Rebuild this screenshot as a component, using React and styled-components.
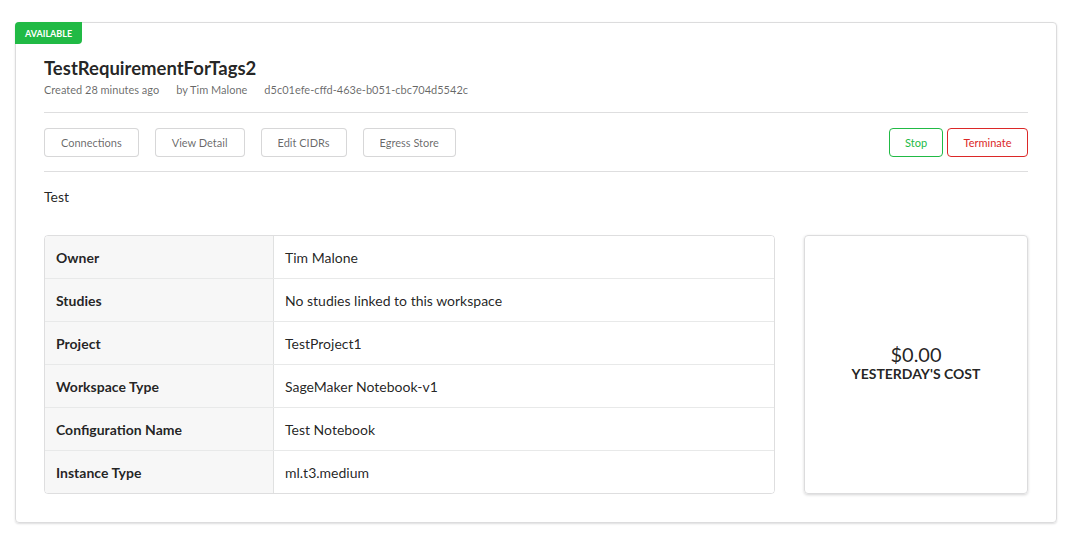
import React from 'react';
import styled, { createGlobalStyle } from 'styled-components';

const GlobalStyle = createGlobalStyle`
  * { box-sizing: border-box; }
  body {
    margin: 0;
    background: #ffffff;
    font-family: Lato, "Helvetica Neue", Arial, sans-serif;
    color: rgba(0, 0, 0, 0.87);
  }
`;

const Page = styled.div`
  padding: 22px 27px 22px 15px;
`;

const Card = styled.div`
  position: relative;
  border: 1px solid #dcdcdd;
  border-radius: 4px;
  box-shadow: 0 1px 2px 0 rgba(34, 36, 38, 0.15);
  padding: 34px 28px 28px 28px;
`;

const StatusLabel = styled.div`
  position: absolute;
  top: -1px;
  left: -1px;
  height: 22px;
  padding: 0 10px;
  display: flex;
  align-items: center;
  background: #21ba45;
  color: #fff;
  font-size: 9px;
  font-weight: 700;
  border-radius: 4px 0 4px 0;
`;

const Title = styled.h2`
  margin: 0;
  font-size: 18.5px;
  line-height: 23px;
  font-weight: 700;
  color: rgba(0, 0, 0, 0.87);
`;

const Meta = styled.div`
  margin-top: 3px;
  display: flex;
  gap: 17px;
  font-size: 11px;
  line-height: 14px;
  color: rgba(0, 0, 0, 0.6);
`;

const Divider = styled.hr`
  margin: ${props => props.$top}px 0 0 0;
  border: none;
  border-top: 1px solid rgba(34, 36, 38, 0.15);
`;

const Toolbar = styled.div`
  margin-top: 15px;
  display: flex;
  align-items: center;
`;

const ButtonGroup = styled.div`
  display: flex;
  gap: ${props => props.$gap}px;
  margin-left: ${props => (props.$right ? 'auto' : '0')};
`;

const tones = {
  basic: { color: 'rgba(0, 0, 0, 0.6)', border: 'rgba(34, 36, 38, 0.18)' },
  green: { color: '#21ba45', border: '#21ba45' },
  red: { color: '#db2828', border: '#db2828' },
};

const Button = styled.button`
  height: 29px;
  padding: 0 ${props => props.$pad}px;
  background: #fff;
  border: 1px solid ${props => tones[props.$tone].border};
  color: ${props => tones[props.$tone].color};
  border-radius: 4px;
  font-family: inherit;
  font-size: 11px;
  cursor: pointer;
`;

const Description = styled.div`
  margin-top: 15px;
  font-size: 14px;
  line-height: 20px;
`;

const InfoRow = styled.div`
  margin-top: 28px;
  display: flex;
  gap: 29px;
  align-items: stretch;
`;

const Table = styled.div`
  width: 731px;
  height: 259px;
  display: flex;
  flex-direction: column;
  border: 1px solid rgba(34, 36, 38, 0.15);
  border-radius: 4px;
  overflow: hidden;
`;

const Row = styled.div`
  flex: 1;
  display: grid;
  grid-template-columns: 229px 1fr;
  border-top: ${props => (props.$first ? 'none' : '1px solid rgba(34, 36, 38, 0.1)')};
`;

const Cell = styled.div`
  display: flex;
  align-items: center;
  padding: 0 11px;
  font-size: 14px;
  font-weight: ${props => (props.$label ? 700 : 400)};
  background: ${props => (props.$label ? '#f7f7f7' : '#fff')};
  border-right: ${props => (props.$label ? '1px solid rgba(34, 36, 38, 0.1)' : 'none')};
`;

const CostCard = styled.div`
  flex: 1;
  border: 1px solid #dcdcdd;
  border-radius: 4px;
  box-shadow: 0 1px 3px 0 #d4d4d5;
  display: flex;
  flex-direction: column;
  align-items: center;
  justify-content: center;
  padding-bottom: 4px;
`;

const CostValue = styled.div`
  font-size: 20px;
  line-height: 22px;
`;

const CostLabel = styled.div`
  font-size: 14px;
  font-weight: 700;
  line-height: 17px;
  text-transform: uppercase;
`;

const details = [
  ['Owner', 'Tim Malone'],
  ['Studies', 'No studies linked to this workspace'],
  ['Project', 'TestProject1'],
  ['Workspace Type', 'SageMaker Notebook-v1'],
  ['Configuration Name', 'Test Notebook'],
  ['Instance Type', 'ml.t3.medium'],
];

export default function App() {
  return (
    <Page>
      <GlobalStyle />
      <Card>
        <StatusLabel>AVAILABLE</StatusLabel>
        <Title>TestRequirementForTags2</Title>
        <Meta>
          <span>Created 28 minutes ago</span>
          <span>by Tim Malone</span>
          <span>d5c01efe-cffd-463e-b051-cbc704d5542c</span>
        </Meta>
        <Divider $top={15} />
        <Toolbar>
          <ButtonGroup $gap={16}>
            <Button $tone="basic" $pad={16}>Connections</Button>
            <Button $tone="basic" $pad={16}>View Detail</Button>
            <Button $tone="basic" $pad={16}>Edit CIDRs</Button>
            <Button $tone="basic" $pad={16}>Egress Store</Button>
          </ButtonGroup>
          <ButtonGroup $gap={4} $right>
            <Button $tone="green" $pad={15}>Stop</Button>
            <Button $tone="red" $pad={15.5}>Terminate</Button>
          </ButtonGroup>
        </Toolbar>
        <Divider $top={14} />
        <Description>Test</Description>
        <InfoRow>
          <Table>
            {details.map(([label, value], i) => (
              <Row key={label} $first={i === 0}>
                <Cell $label>{label}</Cell>
                <Cell>{value}</Cell>
              </Row>
            ))}
          </Table>
          <CostCard>
            <CostValue>$0.00</CostValue>
            <CostLabel>Yesterday's Cost</CostLabel>
          </CostCard>
        </InfoRow>
      </Card>
    </Page>
  );
}
